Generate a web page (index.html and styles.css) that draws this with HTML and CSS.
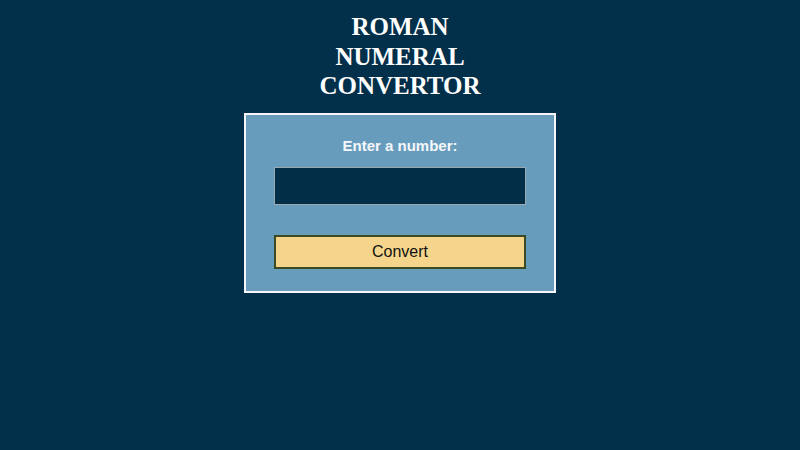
FILE: index.html
```html
<!DOCTYPE html>
<html lang="en">
<head>
<meta charset="utf-8">
<title>Roman Numeral Convertor</title>
<link rel="stylesheet" href="styles.css">
</head>
<body>
  <main class="page">
    <h1 class="title">ROMAN<br>NUMERAL<br>CONVERTOR</h1>
    <form class="card">
      <label class="label" for="number">Enter a number:</label>
      <input class="field" id="number" type="number">
      <button class="btn" type="button">Convert</button>
    </form>
  </main>
</body>
</html>
```
FILE: styles.css
```css
html, body {
  margin: 0;
  padding: 0;
  background: #02304b;
  height: 100%;
}

.page {
  display: flex;
  flex-direction: column;
  align-items: center;
  padding-top: 12px;
}

.title {
  margin: 0 0 12px;
  font-family: "Liberation Serif", "Times New Roman", serif;
  font-weight: bold;
  font-size: 25px;
  line-height: 29.5px;
  color: #ffffff;
  text-align: center;
}

.card {
  box-sizing: border-box;
  width: 312px;
  border: 2px solid #f4f6f8;
  background: #689cbd;
  padding: 22px 28px 22px;
  display: flex;
  flex-direction: column;
  align-items: stretch;
}

.label {
  font-family: "Liberation Sans", Arial, sans-serif;
  font-weight: bold;
  font-size: 15px;
  line-height: 18px;
  color: #f5f7fa;
  text-align: center;
  margin-bottom: 12px;
}

.field {
  box-sizing: border-box;
  height: 38px;
  margin: 0 0 30px;
  border: 1px solid #9aa9b0;
  background: #022e48;
  color: #ffffff;
  font-size: 16px;
  padding: 0 8px;
}

.btn {
  box-sizing: border-box;
  height: 34px;
  border: 2px solid #3d4b22;
  background: #f4d58b;
  color: #111111;
  font-family: "Liberation Sans", Arial, sans-serif;
  font-size: 16px;
  padding: 0;
}
```
